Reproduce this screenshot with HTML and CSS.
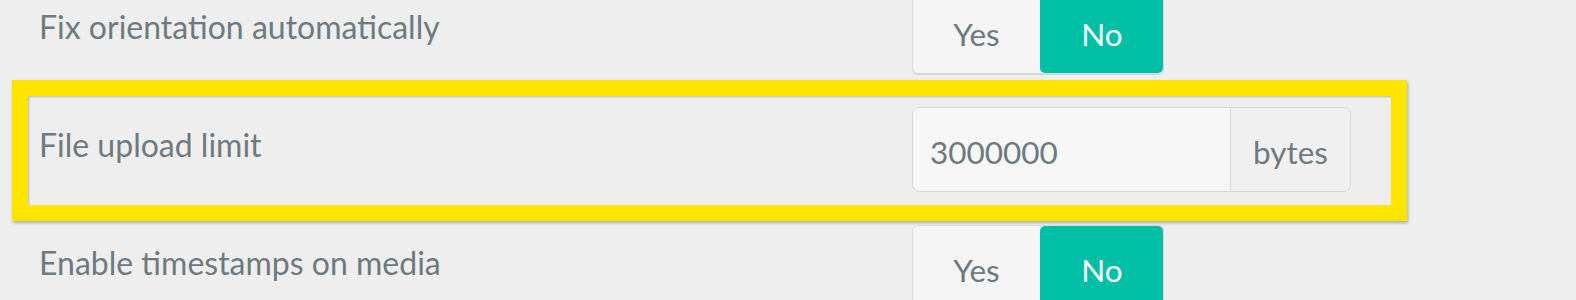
FILE: index.html
```html
<!DOCTYPE html>
<html>
<head>
<meta charset="utf-8">
<link rel="stylesheet" href="styles.css">
</head>
<body>
<div class="settings">
  <div class="row">
    <label class="label">Fix orientation automatically</label>
    <div class="control">
      <div class="toggle">
        <button class="seg">Yes</button>
        <button class="seg active">No</button>
      </div>
    </div>
  </div>
  <div class="row highlight">
    <label class="label">File upload limit</label>
    <div class="control">
      <div class="input-group">
        <input class="input" type="text" value="3000000">
        <span class="addon">bytes</span>
      </div>
    </div>
  </div>
  <div class="row">
    <label class="label">Enable timestamps on media</label>
    <div class="control">
      <div class="toggle">
        <button class="seg">Yes</button>
        <button class="seg active">No</button>
      </div>
    </div>
  </div>
</div>
</body>
</html>
```
FILE: styles.css
```css
html, body {
  margin: 0;
  padding: 0;
  background: #eeeeee;
  font-family: Lato, "Open Sans", sans-serif;
  overflow: hidden;
}

.settings {
  margin-top: -22px;
  margin-left: 28px;
  width: 1363px;
}

.row {
  display: flex;
  box-sizing: border-box;
  height: 109px;
  padding: 0 40px 0 11px;
  margin-bottom: 9px;
}

.highlight {
  box-shadow: 0 0 0 16px #ffe600, 1px 2px 3px 16px rgba(0, 0, 0, 0.28), inset 1px 1px 2px rgba(0, 0, 0, 0.22);
}

.label {
  width: 873px;
  flex: none;
  padding-top: 30px;
  font-size: 32px;
  line-height: 38px;
  color: #6d7a81;
}

.control {
  padding-top: 11px;
}

.toggle {
  display: flex;
  box-sizing: border-box;
  width: 252px;
  height: 85px;
  border: 1px solid #d8d8d8;
  border-radius: 6px;
  box-shadow: 0 1px 0 #d3d3d3;
  background: #f5f5f5;
  overflow: hidden;
}

.seg {
  flex: none;
  border: 0;
  margin: 0;
  padding: 5px 0 0;
  font-family: inherit;
  font-size: 31.5px;
  color: #6d7a81;
  background: #f5f5f5;
  width: 127px;
}

.seg.active {
  width: 124px;
  background: #01bfa5;
  color: #ffffff;
  border-radius: 5px;
}

.input-group {
  display: flex;
  box-sizing: border-box;
  width: 439px;
  height: 85px;
  border: 1.5px solid #d6d6d6;
  border-radius: 7px;
  overflow: hidden;
}

.input {
  box-sizing: border-box;
  width: 318px;
  height: 100%;
  border: 0;
  border-right: 1.5px solid #d6d6d6;
  margin: 0;
  padding: 5px 0 0 17px;
  background: #f7f7f7;
  font-family: inherit;
  font-size: 31.5px;
  color: #6d7a81;
  outline: none;
}

.addon {
  flex: 1;
  display: flex;
  align-items: center;
  justify-content: center;
  padding-top: 5px;
  background: #f0f0f0;
  font-size: 31.5px;
  color: #6d7a81;
}
```
